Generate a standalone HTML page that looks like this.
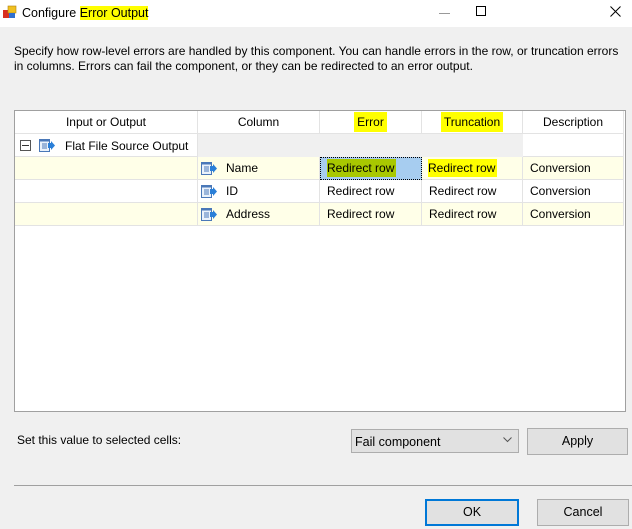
<!DOCTYPE html>
<html><head><meta charset="utf-8"><style>
*{margin:0;padding:0;box-sizing:border-box}
body{width:632px;height:529px;background:#f0f0f0;font-family:"Liberation Sans",sans-serif;font-size:12px;color:#000;position:relative;overflow:hidden}
.a{position:absolute}
.t{position:absolute;white-space:nowrap;line-height:14px}
.hl{background:#ffff00}
.cell{position:absolute;height:23px;border-right:1px solid #e3e3e3;border-bottom:1px solid #e3e3e3;line-height:23px;white-space:nowrap}
.btn{position:absolute;background:#e1e1e1;border:1px solid #adadad;text-align:center;font-size:12.5px}
</style></head><body>
<div class="a" style="left:0;top:0;width:632px;height:27px;background:#fff"></div>
<svg class="a" style="left:3px;top:5px" width="14" height="14" viewBox="0 0 14 14">
<rect x="0" y="5" width="6" height="8" fill="#d83020"/><rect x="5" y="1" width="8" height="7" fill="#f0c020" stroke="#b08010" stroke-width="0.6"/><rect x="6" y="8" width="6" height="5" fill="#3070d0"/></svg>
<div class="t" style="left:22px;top:6px;font-size:12.5px">Configure <span class="hl">Error Output</span></div>
<div class="a" style="left:439px;top:13px;width:11px;height:1px;background:#999"></div>
<div class="a" style="left:476px;top:6px;width:10px;height:10px;border:1px solid #000"></div>
<svg class="a" style="left:610px;top:6px" width="11" height="11" viewBox="0 0 11 11"><path d="M0.5 0.5L10.5 10.5M10.5 0.5L0.5 10.5" stroke="#000" stroke-width="1"/></svg>
<div class="t" style="left:14px;top:44px;font-size:12px;line-height:15px">Specify how row-level errors are handled by this component. You can handle errors in the row, or truncation errors<br>in columns. Errors can fail the component, or they can be redirected to an error output.</div>
<div class="a" style="left:14px;top:110px;width:612px;height:302px;background:#fff;border:1px solid #a0a0a0"></div>
<!-- header -->
<div class="cell" style="left:15px;top:111px;width:183px;text-align:center">Input or Output</div>
<div class="cell" style="left:198px;top:111px;width:122px;text-align:center">Column</div>
<div class="cell" style="left:320px;top:111px;width:102px;text-align:center"><span class="hl" style="padding:3px 3px">Error</span></div>
<div class="cell" style="left:422px;top:111px;width:101px;text-align:center"><span class="hl" style="padding:3px 3px">Truncation</span></div>
<div class="cell" style="left:523px;top:111px;width:101px;text-align:center">Description</div>
<!-- flat file row -->
<div class="cell" style="left:15px;top:134px;width:183px"></div>
<div class="a" style="left:198px;top:134px;width:325px;height:23px;background:#f0f0f0"></div>
<div class="cell" style="left:523px;top:134px;width:101px"></div>
<div class="a" style="left:20px;top:140px;width:11px;height:11px;border:1px solid #555;background:#fff"></div>
<div class="a" style="left:22px;top:145px;width:7px;height:1px;background:#333"></div>
<svg class="a" style="left:39px;top:139px" width="16" height="13" viewBox="0 0 16 13"><rect x="0.5" y="0.5" width="10" height="12" fill="#eaf2fb" stroke="#4a78b8"/><rect x="0.5" y="0.5" width="10" height="2" fill="#4a78b8"/><path d="M3 5h5M3 7h5M3 9h5" stroke="#4a78b8"/><path d="M9 4h3V2l4 4.5-4 4.5V9H9z" fill="#2a7fd8"/></svg>
<div class="t" style="left:65px;top:139px">Flat File Source Output</div>
<!-- rows -->
<div class="cell" style="left:15px;top:157px;width:183px;background:#ffffe8"></div>
<div class="cell" style="left:198px;top:157px;width:122px;background:#ffffe8;padding-left:28px">Name</div>
<div class="cell" style="left:320px;top:157px;width:102px;background:#a7cdf0;border:1px dotted #000;padding-left:6px;line-height:21px"><span style="background:#a8c800;padding:2px 2px 2px 0">Redirect row</span></div>
<div class="cell" style="left:422px;top:157px;width:101px;background:#ffffe8;padding-left:6px"><span class="hl" style="padding:2px 2px 2px 0">Redirect row</span></div>
<div class="cell" style="left:523px;top:157px;width:101px;background:#ffffe8;padding-left:7px">Conversion</div>

<div class="cell" style="left:15px;top:180px;width:183px"></div>
<div class="cell" style="left:198px;top:180px;width:122px;padding-left:28px">ID</div>
<div class="cell" style="left:320px;top:180px;width:102px;padding-left:7px">Redirect row</div>
<div class="cell" style="left:422px;top:180px;width:101px;padding-left:7px">Redirect row</div>
<div class="cell" style="left:523px;top:180px;width:101px;padding-left:7px">Conversion</div>

<div class="cell" style="left:15px;top:203px;width:183px;background:#ffffe8"></div>
<div class="cell" style="left:198px;top:203px;width:122px;background:#ffffe8;padding-left:28px">Address</div>
<div class="cell" style="left:320px;top:203px;width:102px;background:#ffffe8;padding-left:7px">Redirect row</div>
<div class="cell" style="left:422px;top:203px;width:101px;background:#ffffe8;padding-left:7px">Redirect row</div>
<div class="cell" style="left:523px;top:203px;width:101px;background:#ffffe8;padding-left:7px">Conversion</div>

<svg class="a" style="left:201px;top:162px" width="16" height="13" viewBox="0 0 16 13"><rect x="0.5" y="0.5" width="10" height="12" fill="#eaf2fb" stroke="#4a78b8"/><rect x="0.5" y="0.5" width="10" height="2" fill="#4a78b8"/><path d="M3 5h5M3 7h5M3 9h5" stroke="#4a78b8"/><path d="M9 4h3V2l4 4.5-4 4.5V9H9z" fill="#2a7fd8"/></svg>
<svg class="a" style="left:201px;top:185px" width="16" height="13" viewBox="0 0 16 13"><rect x="0.5" y="0.5" width="10" height="12" fill="#eaf2fb" stroke="#4a78b8"/><rect x="0.5" y="0.5" width="10" height="2" fill="#4a78b8"/><path d="M3 5h5M3 7h5M3 9h5" stroke="#4a78b8"/><path d="M9 4h3V2l4 4.5-4 4.5V9H9z" fill="#2a7fd8"/></svg>
<svg class="a" style="left:201px;top:208px" width="16" height="13" viewBox="0 0 16 13"><rect x="0.5" y="0.5" width="10" height="12" fill="#eaf2fb" stroke="#4a78b8"/><rect x="0.5" y="0.5" width="10" height="2" fill="#4a78b8"/><path d="M3 5h5M3 7h5M3 9h5" stroke="#4a78b8"/><path d="M9 4h3V2l4 4.5-4 4.5V9H9z" fill="#2a7fd8"/></svg>

<div class="t" style="left:17px;top:433px">Set this value to selected cells:</div>
<div class="a" style="left:351px;top:429px;width:168px;height:24px;background:#e1e1e1;border:1px solid #adadad"></div>
<div class="t" style="left:355px;top:435px;font-size:12.5px">Fail component</div>
<svg class="a" style="left:503px;top:437px" width="9" height="6" viewBox="0 0 9 6"><path d="M0.5 0.5L4.5 4.5 8.5 0.5" fill="none" stroke="#555"/></svg>
<div class="btn" style="left:527px;top:428px;width:101px;height:27px;line-height:25px">Apply</div>
<div class="a" style="left:14px;top:485px;width:618px;height:1px;background:#a0a0a0"></div>
<div class="btn" style="left:425px;top:499px;width:94px;height:27px;line-height:23px;border:2px solid #0078d7">OK</div>
<div class="btn" style="left:537px;top:499px;width:92px;height:27px;line-height:25px">Cancel</div>
</body></html>
